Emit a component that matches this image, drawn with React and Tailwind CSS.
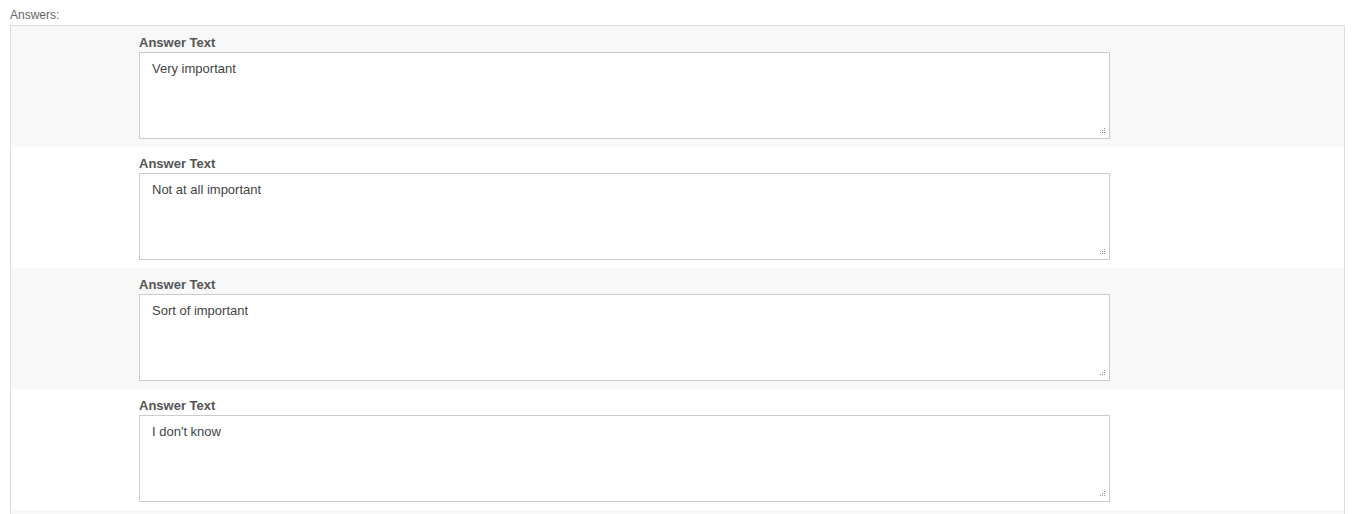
import React from 'react'

const answers = ["Very important", "Not at all important", "Sort of important", "I don't know"];

const Grip = () => (
  <svg className="absolute right-[3px] bottom-[3px]" width="7" height="7" viewBox="0 0 7 7">
    <rect x="5" y="0" width="1" height="1" fill="#999" />
    <rect x="3" y="2" width="1" height="1" fill="#999" />
    <rect x="5" y="2" width="1" height="1" fill="#999" />
    <rect x="1" y="4" width="1" height="1" fill="#999" />
    <rect x="3" y="4" width="1" height="1" fill="#999" />
    <rect x="5" y="4" width="1" height="1" fill="#999" />
  </svg>
);

export default function App() {
  return (
    <div className="bg-white min-h-screen font-['Liberation_Sans',Arial,sans-serif] text-[#555] px-[10px] pt-[8px]">
      <div className="text-[12px] leading-[14px] text-[#666] mb-[3px]">Answers:</div>
      <div className="border border-[#ddd] border-b-0">
        {answers.map((a, i) => (
          <div key={i} className={(i % 2 === 0 ? "bg-[#f8f8f8]" : "bg-white") + " h-[121px] pt-[8px] pl-[128px]"}>
            <label className="block text-[13px] leading-[17px] mb-[1px] font-bold text-[#555]">Answer Text</label>
            <div className="relative w-[971px] h-[87px] border border-[#ccc] bg-white">
              <div className="px-[12px] pt-[7px] text-[13px] leading-[17px] text-[#444]">{a}</div>
              <Grip />
            </div>
          </div>
        ))}
        <div className="h-[20px] bg-[#f8f8f8]"></div>
      </div>
    </div>
  )
}
